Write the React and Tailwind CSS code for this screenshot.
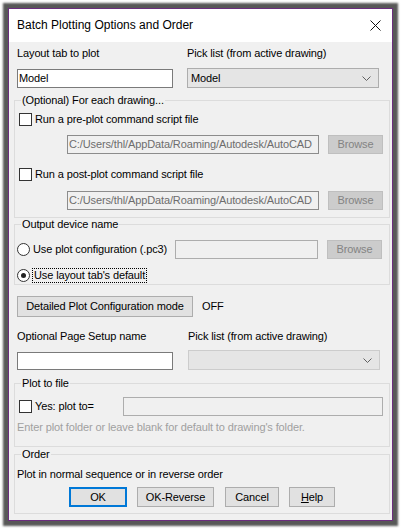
import React from 'react'

const PATH = 'C:/Users/thl/AppData/Roaming/Autodesk/AutoCAD'

function CheckBox() {
  return <span className="inline-block h-[13px] w-[13px] shrink-0 border border-[#333] bg-white" />
}

function Radio({ checked }) {
  return (
    <span className="flex h-[13px] w-[13px] shrink-0 items-center justify-center rounded-full border border-[#333] bg-white">
      {checked && <span className="h-[5px] w-[5px] rounded-full bg-[#222]" />}
    </span>
  )
}

function Chevron() {
  return (
    <svg width="9" height="5" viewBox="0 0 9 5" className="shrink-0">
      <path d="M0.5 0.5 L4.5 4.5 L8.5 0.5" fill="none" stroke="#606060" strokeWidth="1" />
    </svg>
  )
}

function Browse() {
  return (
    <div className="flex h-[19px] w-[55px] items-center justify-center border border-[#bfbfbf] bg-[#cccccc] text-[#838383]">
      Browse
    </div>
  )
}

function PathBox({ children }) {
  return (
    <div className="flex h-[19px] w-[252px] items-center overflow-hidden whitespace-nowrap border border-[#8c8c8c] bg-[#f0f0f0] pl-[1px] text-[#6d6d6d]">
      <span className="block w-[248px] overflow-hidden">{children}</span>
    </div>
  )
}

function Group({ label, className, children }) {
  return (
    <fieldset className={'ml-[5px] w-[376px] border border-[#dcdcdc] ' + (className || '')}>
      <legend className="ml-[6px] px-[1px] leading-[13px]">{label}</legend>
      {children}
    </fieldset>
  )
}

export default function App() {
  return (
    <div className="h-[530px] w-[401px] bg-white pl-[8px] pt-[8px] font-['Liberation_Sans',Arial,sans-serif] text-[11px] leading-[13px] tracking-[-0.12px] text-black">
      <div className="w-[385px] border border-[#6b2d7e] bg-[#f0f0f0] shadow-[0_0_2px_5px_rgba(70,70,70,0.9)]">
        {/* title bar */}
        <div className="flex h-[33px] items-center justify-between bg-white pl-[8px] pr-[11px]">
          <span className="text-[12px] tracking-[0px]">Batch Plotting Options and Order</span>
          <svg width="11" height="11" viewBox="0 0 11 11">
            <path d="M0.5 0.5 L10.5 10.5 M10.5 0.5 L0.5 10.5" stroke="#111" strokeWidth="1" />
          </svg>
        </div>

        {/* layout tab row */}
        <div className="mt-[5px] flex pl-[8px]">
          <span className="w-[170px]">Layout tab to plot</span>
          <span>Pick list (from active drawing)</span>
        </div>
        <div className="mt-[8px] flex items-start pl-[8px]">
          <div className="mt-[1px] flex h-[19px] w-[156px] items-center border border-[#7a7a7a] bg-white px-[1px]">
            Model
          </div>
          <div className="ml-[14px] flex h-[20px] w-[192px] items-center justify-between border border-[#adadad] bg-[#e5e5e5] pl-[3px] pr-[7px]">
            <span>Model</span>
            <Chevron />
          </div>
        </div>

        {/* pre/post plot */}
        <Group label="(Optional) For each drawing..." className="mt-[6px] pb-[7px]">
          <div className="mt-[6px] flex items-center gap-[3px] pl-[4px]">
            <CheckBox />
            <span>Run a pre-plot command script file</span>
          </div>
          <div className="mt-[9px] flex items-center gap-[9px] pl-[52px]">
            <PathBox>{PATH}</PathBox>
            <Browse />
          </div>
          <div className="mt-[14px] flex items-center gap-[3px] pl-[4px]">
            <CheckBox />
            <span>Run a post-plot command script file</span>
          </div>
          <div className="mt-[10px] flex items-center gap-[9px] pl-[52px]">
            <PathBox>{PATH}</PathBox>
            <Browse />
          </div>
        </Group>

        {/* output device */}
        <Group label="Output device name">
          <div className="mt-[9px] flex items-center pl-[2px]">
            <Radio />
            <span className="ml-[3px] w-[142px]">Use plot configuration (.pc3)</span>
            <div className="h-[19px] w-[143px] border border-[#adadad] bg-[#f0f0f0]" />
            <div className="ml-[9px]">
              <Browse />
            </div>
          </div>
          <div className="mt-[8px] flex h-[17px] items-center pl-[2px]">
            <Radio checked />
            <span className="ml-[2px] border border-dotted border-black px-[1px] leading-[13px]">
              Use layout tab's default
            </span>
          </div>
        </Group>

        {/* detailed */}
        <div className="mt-[11px] flex items-center pl-[8px]">
          <div className="flex h-[21px] w-[176px] items-center justify-center border border-[#adadad] bg-[#e1e1e1]">
            Detailed Plot Configuration mode
          </div>
          <span className="ml-[9px]">OFF</span>
        </div>

        {/* page setup */}
        <div className="mt-[13px] flex pl-[8px]">
          <span className="w-[171px]">Optional Page Setup name</span>
          <span>Pick list (from active drawing)</span>
        </div>
        <div className="mt-[7px] flex items-start pl-[8px]">
          <div className="mt-[2px] h-[18px] w-[156px] border border-[#7a7a7a] bg-white" />
          <div className="ml-[15px] flex h-[20px] w-[192px] items-center justify-end border border-[#cccccc] bg-[#e5e5e5] pr-[7px]">
            <Chevron />
          </div>
        </div>

        {/* plot to file */}
        <Group label="Plot to file" className="mt-[7px] pb-[12px]">
          <div className="mt-[7px] flex items-center pl-[4px]">
            <CheckBox />
            <span className="ml-[3px] w-[88px]">Yes: plot to=</span>
            <div className="h-[19px] w-[260px] border border-[#adadad] bg-[#f0f0f0]" />
          </div>
          <div className="mt-[5px] pl-[2px] text-[#a0a0a0]">
            Enter plot folder or leave blank for default to drawing's folder.
          </div>
        </Group>

        {/* order */}
        <Group label="Order" className="mb-[6px] mt-[1px] pb-[6px]">
          <div className="mt-[7px] pl-[2px]">Plot in normal sequence or in reverse order</div>
          <div className="mt-[6px] flex items-center pl-[54px]">
            <div className="flex h-[20px] w-[58px] items-center justify-center border-2 border-[#0078d7] bg-[#e1e1e1]">
              OK
            </div>
            <div className="ml-[10px] flex h-[20px] w-[77px] items-center justify-center border border-[#adadad] bg-[#e1e1e1]">
              OK-Reverse
            </div>
            <div className="ml-[11px] flex h-[20px] w-[54px] items-center justify-center border border-[#adadad] bg-[#e1e1e1]">
              Cancel
            </div>
            <div className="ml-[10px] flex h-[20px] w-[46px] items-center justify-center border border-[#adadad] bg-[#e1e1e1]">
              <span>
                <span className="underline">H</span>elp
              </span>
            </div>
          </div>
        </Group>
      </div>
    </div>
  )
}
